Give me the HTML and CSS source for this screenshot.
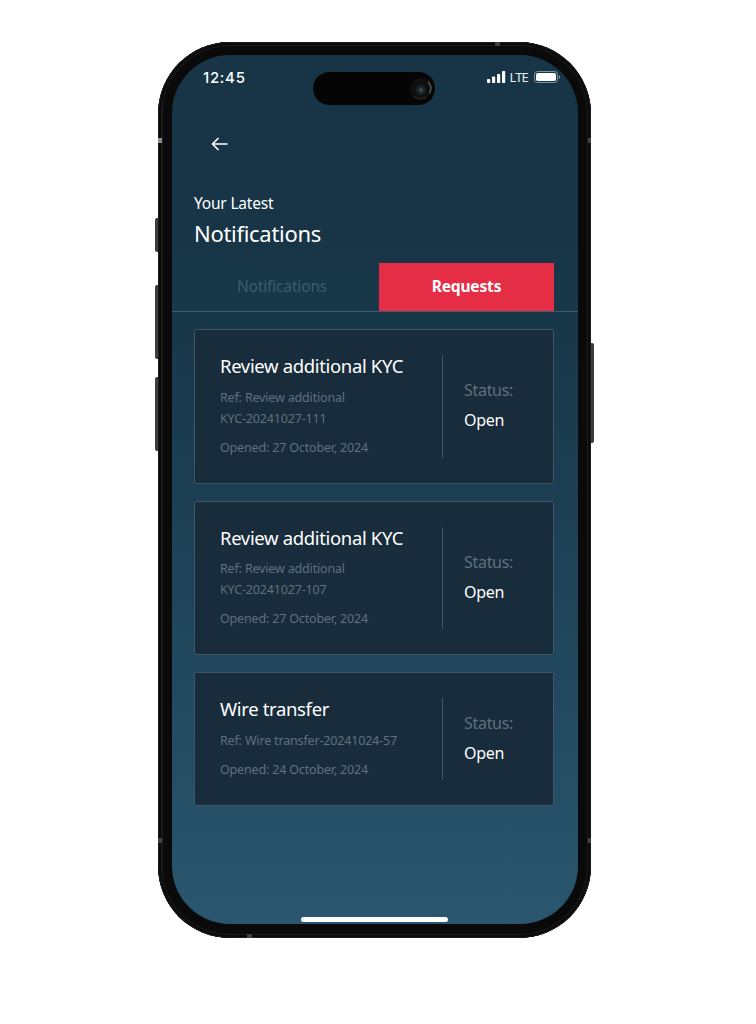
FILE: index.html
```html
<!DOCTYPE html>
<html lang="en">
<head>
<meta charset="utf-8">
<title>Notifications</title>
<link rel="stylesheet" href="styles.css">
</head>
<body>
<div class="phone">
  <span class="side side-l1"></span>
  <span class="side side-l2"></span>
  <span class="side side-l3"></span>
  <span class="side side-r1"></span>
  <div class="bezel">
    <span class="band band-l1"></span>
    <span class="band band-l2"></span>
    <span class="band band-r1"></span>
    <span class="band band-r2"></span>
    <span class="band band-t"></span>
    <span class="band band-b"></span>
    <div class="screen">
      <div class="island">
        <svg class="camera" width="26" height="26" viewBox="0 0 26 26">
          <circle cx="13" cy="13" r="11" fill="#101010"/>
          <path d="M20 5.5a10 10 0 0 1 1.5 11.5" fill="none" stroke="#4d4f50" stroke-width="1.6"/>
          <path d="M6 20.5a10 10 0 0 0 12 .5" fill="none" stroke="#2a2b2c" stroke-width="1.2"/>
          <circle cx="13" cy="14" r="5" fill="#1c2326"/>
          <circle cx="13" cy="14" r="2" fill="#3a4c56"/>
        </svg>
      </div>
      <div class="status">
        <span class="time">12:45</span>
        <div class="status-right">
          <svg width="19" height="12" viewBox="0 0 19 12">
            <rect x="0" y="8" width="3.2" height="4" rx=".8" fill="#fff"/>
            <rect x="5" y="5.5" width="3.2" height="6.5" rx=".8" fill="#fff"/>
            <rect x="10" y="3" width="3.2" height="9" rx=".8" fill="#fff"/>
            <rect x="15" y="0" width="3.2" height="12" rx=".8" fill="#fff"/>
          </svg>
          <span class="lte">LTE</span>
          <svg width="26" height="12" viewBox="0 0 26 12">
            <rect x=".5" y=".5" width="23" height="11" rx="3" fill="none" stroke="#7d95a3"/>
            <rect x="2" y="2" width="20" height="8" rx="1.8" fill="#fff"/>
            <rect x="24.8" y="4.5" width="1.2" height="3" rx=".6" fill="#7d95a3"/>
          </svg>
        </div>
      </div>
      <div class="back">
        <svg width="18" height="14" viewBox="0 0 18 14">
          <path d="M16.5 7H1.5M7.5 1 1.5 7l6 6" fill="none" stroke="#fff" stroke-width="1.6"/>
        </svg>
      </div>
      <div class="heading">
        <p class="eyebrow">Your Latest</p>
        <h1 class="title">Notifications</h1>
      </div>
      <div class="tabs">
        <div class="tab">Notifications</div>
        <div class="tab tab-active">Requests</div>
      </div>
      <div class="cards">
        <section class="card">
          <div class="card-main">
            <h2 class="card-title">Review additional KYC</h2>
            <p class="meta">Ref: Review additional<br>KYC-20241027-111</p>
            <p class="meta meta-date">Opened: 27 October, 2024</p>
          </div>
          <div class="card-status">
            <span class="status-label">Status:</span>
            <span class="status-value">Open</span>
          </div>
        </section>
        <section class="card">
          <div class="card-main">
            <h2 class="card-title">Review additional KYC</h2>
            <p class="meta">Ref: Review additional<br>KYC-20241027-107</p>
            <p class="meta meta-date">Opened: 27 October, 2024</p>
          </div>
          <div class="card-status">
            <span class="status-label">Status:</span>
            <span class="status-value">Open</span>
          </div>
        </section>
        <section class="card">
          <div class="card-main">
            <h2 class="card-title">Wire transfer</h2>
            <p class="meta">Ref: Wire transfer-20241024-57</p>
            <p class="meta meta-date">Opened: 24 October, 2024</p>
          </div>
          <div class="card-status">
            <span class="status-label">Status:</span>
            <span class="status-value">Open</span>
          </div>
        </section>
      </div>
      <div class="home-bar"></div>
    </div>
  </div>
</div>
</body>
</html>
```
FILE: styles.css
```css
* { box-sizing: border-box; }
html, body { margin: 0; padding: 0; background: #fff; }
body {
  height: 1024px;
  overflow: hidden;
  font-family: "Noto Sans", "Open Sans", sans-serif;
  color: #fff;
}
.phone {
  position: relative;
  width: 433px;
  height: 896px;
  margin: 42px 0 0 158px;
}
.side { position: absolute; width: 4px; background: #3a3c3d; }
.side-l1 { left: -3px; top: 176px; height: 34px; border-radius: 2px 0 0 2px; }
.side-l2 { left: -3px; top: 243px; height: 74px; border-radius: 2px 0 0 2px; }
.side-l3 { left: -3px; top: 335px; height: 74px; border-radius: 2px 0 0 2px; }
.side-r1 { right: -3px; top: 301px; height: 100px; border-radius: 0 2px 2px 0; background: #3a3c3d; }
.bezel {
  position: relative;
  height: 100%;
  padding: 13px 13px 14px 14px;
  background: linear-gradient(90deg, #77797a 0, #4a4c4d 3px, #1c1c1c 4px, #0a0a0a 6px);
  border-radius: 72px;
  box-shadow: inset 0 0 0 1px #1b1b1b, inset 0 0 0 3px #0a0a0a, inset 0 0 0 4px #1a1b1c;
}
.band { position: absolute; background: #3f4143; }
.band-l1 { left: 0; top: 96px; width: 4px; height: 5px; background: #8a8c8d; }
.band-l2 { left: 0; top: 796px; width: 4px; height: 5px; }
.band-r1 { right: 0; top: 96px; width: 3px; height: 5px; }
.band-r2 { right: 0; top: 796px; width: 3px; height: 5px; }
.band-t { left: 337px; top: 0; width: 5px; height: 4px; }
.band-b { left: 89px; bottom: 0; width: 5px; height: 4px; }
.screen {
  position: relative;
  height: 100%;
  display: flex;
  flex-direction: column;
  border-radius: 58px;
  overflow: hidden;
  background: linear-gradient(180deg, #173546 0%, #173546 22%, #1c3f53 52%, #2a566f 100%);
}
.island {
  position: absolute;
  left: 141px;
  top: 17px;
  width: 122px;
  height: 33px;
  border-radius: 17px;
  background: #050505;
  display: flex;
  align-items: center;
  justify-content: flex-end;
  padding-right: 1px;
}
.camera { display: block; }
.status {
  display: flex;
  justify-content: space-between;
  align-items: center;
  height: 20px;
  margin-top: 12px;
  padding: 0 18px 0 31px;
}
.time { font-family: "Inter", "Liberation Sans", sans-serif; font-size: 15px; font-weight: 500; letter-spacing: .7px; }
.status-right { display: flex; align-items: center; gap: 4px; }
.status-right svg { display: block; }
.lte { font-size: 13px; line-height: 12px; letter-spacing: -.8px; color: #e8edf0; margin: 0 2px 0 -1px; }
.back { margin: 50px 0 0 39px; height: 14px; }
.back svg { display: block; }
.heading { margin: 42px 0 0 22px; }
.eyebrow { margin: 0; font-size: 15.5px; line-height: 20px; letter-spacing: -.2px; }
.title { margin: 4px 0 0; font-size: 22px; line-height: 32px; font-weight: 400; letter-spacing: -.3px; }
.tabs {
  display: flex;
  gap: 5px;
  margin-top: 14px;
  padding: 0 24px 0 18px;
  height: 49px;
  border-bottom: 1px solid #3c5d6e;
}
.tab {
  flex: 1 1 0;
  display: flex;
  align-items: center;
  justify-content: center;
  padding-bottom: 2px;
  font-size: 15.5px;
  letter-spacing: -.15px;
  color: #3d5b6d;
}
.tab-active { flex: 0 0 175px; background: #e52d45; color: #fff; font-weight: 700; }
.cards {
  display: flex;
  flex-direction: column;
  gap: 17px;
  margin: 17px 24px 0 22px;
}
.card {
  display: flex;
  padding: 25px 0 25px 25px;
  background: #182c3b;
  border: 1px solid #3e5665;
  border-radius: 2px;
}
.card-main { width: 223px; border-right: 1px solid #3e5665; }
.card-title { margin: 0; font-size: 18.5px; line-height: 21.5px; font-weight: 400; letter-spacing: -.35px; }
.meta { margin: 10px 0 0; font-size: 12.5px; line-height: 21px; letter-spacing: -.17px; color: #60717d; }
.meta-date { margin-top: 8px; }
.card-status { display: flex; flex-direction: column; justify-content: center; padding: 0 0 2px 21px; gap: 8px; }
.status-label { font-size: 16px; line-height: 22px; letter-spacing: -.3px; color: #60717d; }
.status-value { font-size: 16px; line-height: 22px; letter-spacing: -.3px; }
.home-bar {
  position: absolute;
  left: 129px;
  bottom: 2px;
  width: 147px;
  height: 5px;
  border-radius: 3px;
  background: #fff;
}
```
